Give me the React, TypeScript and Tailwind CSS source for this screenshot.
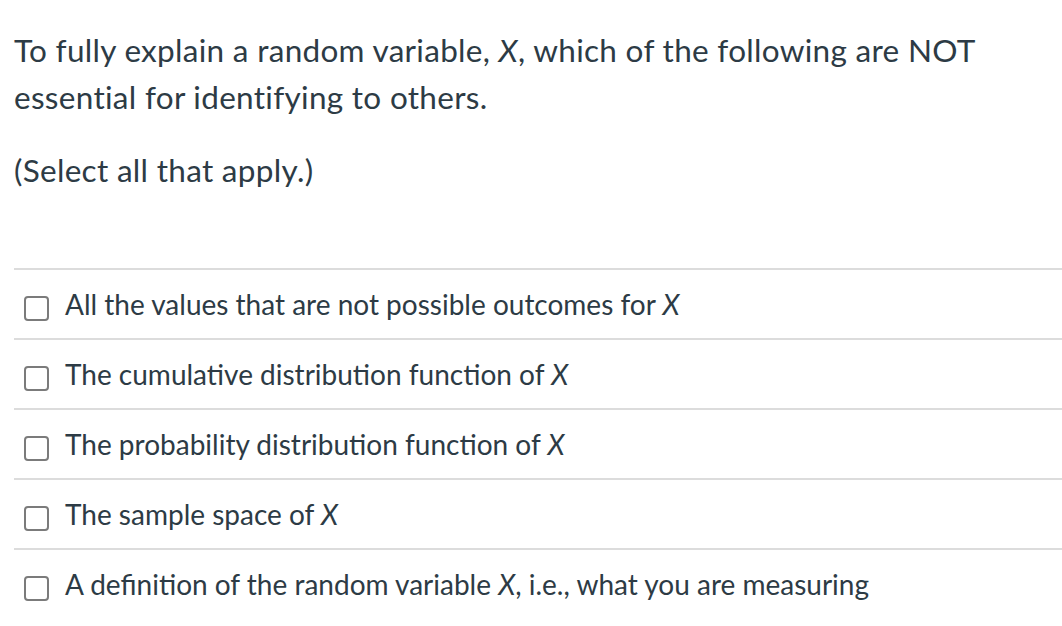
import React, { useState } from 'react';

const options = [
  { pre: 'All the values that are not possible outcomes for ', post: '' },
  { pre: 'The cumulative distribution function of ', post: '' },
  { pre: 'The probability distribution function of ', post: '' },
  { pre: 'The sample space of ', post: '' },
  { pre: 'A definition of the random variable ', post: ', i.e., what you are measuring' },
];

const App: React.FC = () => {
  const [checked, setChecked] = useState<boolean[]>(options.map(() => false));

  const toggle = (i: number) => {
    setChecked((c) => c.map((v, j) => (j === i ? !v : v)));
  };

  return (
    <div className="min-h-screen bg-white text-[#2d3b45] font-['Lato','Noto_Sans',sans-serif]">
      <div className="pl-[14px] pt-[27px]">
        {/* Question */}
        <div className="text-[31.5px] leading-[47px] tracking-[0.3px] pr-4">
          <p>
            To fully explain a random variable, <i>X</i>, which of the following are NOT essential for identifying to others.
          </p>
          <p className="mt-[26px]">(Select all that apply.)</p>
        </div>

        {/* Answers */}
        <div className="mt-[74px]">
          {options.map((o, i) => (
            <label
              key={i}
              className="flex items-center h-[70px] border-t-2 border-[#dcdcdc] cursor-pointer"
            >
              <span
                onClick={() => toggle(i)}
                className={`ml-[10px] w-[25px] h-[25px] shrink-0 rounded-[4px] border-2 mt-[8px] ${
                  checked[i] ? 'border-[#0374b5] bg-[#0374b5]' : 'border-[#7b7b7b] bg-white'
                }`}
              />
              <span className="ml-[16px] text-[28px] leading-none">
                {o.pre}
                <i>X</i>
                {o.post}
              </span>
            </label>
          ))}
        </div>
      </div>
    </div>
  );
};

export default App;
